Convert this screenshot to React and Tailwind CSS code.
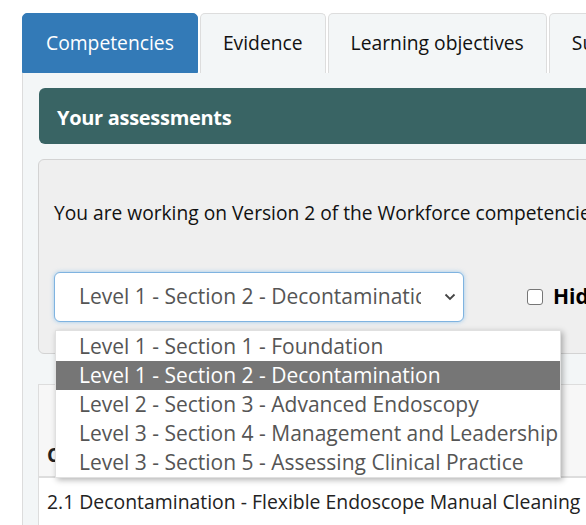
import React from "react";

const font = { fontFamily: '"Open Sans", "Noto Sans", sans-serif' };

function Tab({ children, active }) {
  return (
    <div
      className={
        active
          ? "h-[60px] px-[23px] flex items-center rounded-t-[5px] bg-[#337ab7] text-white border border-[#337ab7] text-[19.3px] whitespace-nowrap"
          : "h-[60px] px-[22px] flex items-center rounded-t-[5px] bg-[#f3f6f7] text-[#111] border border-b-0 border-[#dddddd] text-[19.3px] whitespace-nowrap"
      }
    >
      {children}
    </div>
  );
}

const options = [
  "Level 1 - Section 1 - Foundation",
  "Level 1 - Section 2 - Decontamination",
  "Level 2 - Section 3 - Advanced Endoscopy",
  "Level 3 - Section 4 - Management and Leadership",
  "Level 3 - Section 5 - Assessing Clinical Practice",
];

export default function App() {
  return (
    <div className="w-[586px] h-[525px] overflow-hidden bg-white relative" style={font}>
      <div className="w-[1000px] pl-[22px] pt-[13px]">
        <div className="flex gap-[2px]">
          <Tab active>Competencies</Tab>
          <Tab>Evidence</Tab>
          <Tab>Learning objectives</Tab>
          <Tab>Summary</Tab>
        </div>
        <div className="bg-[#f3f6f7] border-l border-[#dcdcdc] pl-[16px] pt-[15px] pb-[40px]">
          <div className="h-[56px] bg-[#396464] rounded-[6px] flex items-center pl-[18px] pt-[4px] text-white font-bold text-[20px] tracking-[-0.3px]">
            Your assessments
          </div>
          <div className="mt-[15px] -ml-px bg-[#efefef] border border-[#d3d3d3] rounded-[6px] pl-[15px] pt-[40px] pb-[31px]">
            <p className="text-[19.2px] text-[#111] leading-[26px] whitespace-nowrap">
              You are working on Version 2 of the Workforce competencies framework for this role.
            </p>
            <div className="mt-[46px] flex items-center">
              <div className="w-[410px] h-[50px] bg-white border border-[#7fb3e0] rounded-[6px] shadow-[0_0_4px_rgba(102,175,233,0.6)] flex items-center pl-[24px] pr-[6px]">
                <span className="w-[342px] text-[21px] text-[#555] whitespace-nowrap overflow-hidden">
                  Level 1 - Section 2 - Decontaminatic
                </span>
                <span className="flex-1" />
                <svg width="12" height="8" viewBox="0 0 12 8" className="mr-[1px]">
                  <path d="M1.5 1.5 L6 6 L10.5 1.5" fill="none" stroke="#444" strokeWidth="1.8" />
                </svg>
              </div>
              <div className="ml-[63px] flex items-center">
                <span className="w-[16px] h-[16px] border border-[#767676] rounded-[3px] bg-white" />
                <span className="ml-[10px] font-bold text-[21px] text-black whitespace-nowrap">
                  Hide completed competencies
                </span>
              </div>
            </div>
          </div>
          <div className="mt-[30px] -ml-px border border-[#dddddd] bg-[#f7f7f7]">
            <div className="h-[93px] flex items-end pb-[7px] pl-[8px] border-b-2 border-[#dddddd]">
              <span className="text-[19.5px] font-bold text-[#222]">Competency</span>
            </div>
            <div className="bg-white h-[48px] flex items-center pl-[8px]">
              <span className="text-[19.4px] text-[#222] whitespace-nowrap">
                2.1 Decontamination - Flexible Endoscope Manual Cleaning
              </span>
            </div>
          </div>
        </div>
      </div>
      <div className="absolute left-[55px] top-[330px] w-[506px] bg-white border border-[#e0e0e0] pt-px shadow-[2px_2px_6px_rgba(0,0,0,0.3)]">
        {options.map((o, i) => (
          <div
            key={o}
            className={
              i === 1
                ? "h-[29px] flex items-center pl-[23px] bg-[#767676] text-white text-[21px] whitespace-nowrap"
                : "h-[29px] flex items-center pl-[23px] text-[#555] text-[21px] whitespace-nowrap"
            }
          >
            {o}
          </div>
        ))}
      </div>
    </div>
  );
}
